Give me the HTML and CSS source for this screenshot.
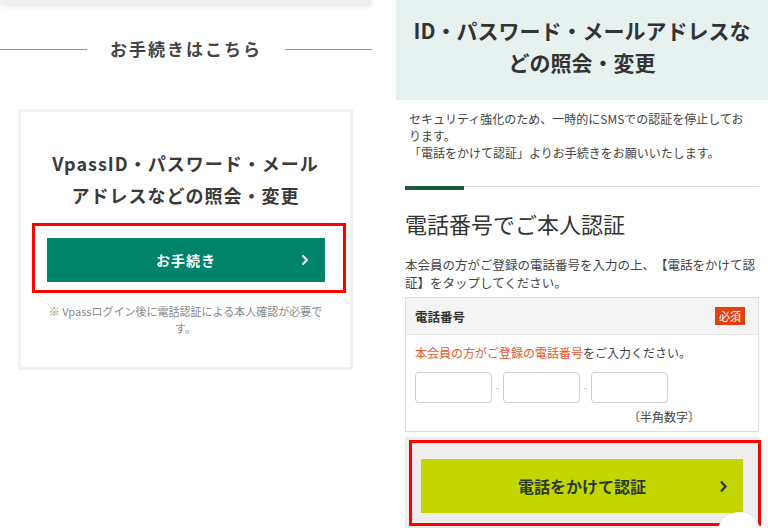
FILE: index.html
```html
<!doctype html>
<html lang="ja">
<head>
<meta charset="utf-8">
<title>お手続き</title>
<link rel="stylesheet" href="styles.css">
</head>
<body>
<div class="page">

  <section class="left">
    <div class="topbar"></div>
    <h2 class="sec-head"><i></i><span>お手続きはこちら</span><i></i></h2>
    <div class="card">
      <h3 class="card-title">VpassID・パスワード・メール<br>アドレスなどの照会・変更</h3>
      <div class="hl">
        <a href="#" class="btn btn-green">
          <span class="btn-label">お手続き</span>
          <svg class="chev" width="8" height="12" viewBox="0 0 8 12"><polyline points="1.5,1.5 6,6 1.5,10.5" fill="none" stroke="#fff" stroke-width="2"/></svg>
        </a>
      </div>
      <p class="note">※ Vpassログイン後に電話認証による本人確認が必要で<br>す。</p>
    </div>
  </section>

  <section class="right">
    <div class="head">
      <h1>ID・パスワード・メールアドレスな<br>どの照会・変更</h1>
    </div>
    <div class="body">
      <p class="lead">セキュリティ強化のため、一時的にSMSでの認証を停止してお<br>ります。<br>「電話をかけて認証」よりお手続きをお願いいたします。</p>

      <div class="divider"><i></i><b></b></div>

      <h2 class="auth-title">電話番号でご本人認証</h2>
      <p class="desc">本会員の方がご登録の電話番号を入力の上、【電話をかけて認<br>証】をタップしてください。</p>

      <div class="form">
        <div class="form-head">
          <span class="form-label">電話番号</span>
          <span class="req">必須</span>
        </div>
        <div class="form-body">
          <p class="hint"><em>本会員の方がご登録の電話番号</em>をご入力ください。</p>
          <div class="tel">
            <input type="text" class="tel-box">
            <span class="dash">-</span>
            <input type="text" class="tel-box">
            <span class="dash">-</span>
            <input type="text" class="tel-box">
          </div>
          <p class="half">〔半角数字〕</p>
        </div>
      </div>

      <div class="submit">
        <a href="#" class="btn btn-lime">
          <span class="btn-label">電話をかけて認証</span>
          <svg class="chev" width="9" height="13" viewBox="0 0 9 13"><polyline points="2,1.5 6.5,6.5 2,11.5" fill="none" stroke="#333" stroke-width="2.2"/></svg>
        </a>
        <div class="hl-over"></div>
      </div>
    </div>
  </section>

</div>
<div class="to-top"></div>
</body>
</html>
```

FILE: styles.css
```css
html, body { margin: 0; overflow: hidden; }
body {
    font-family: "Noto Sans CJK JP", "Noto Sans", sans-serif;
    color: #333;
    background: #fff;
    text-spacing-trim: space-all;
}
.page {
    display: flex;
    gap: 24px;
    width: 768px;
    height: 528px;
}
p, h1, h2, h3 { margin: 0; }

/* left */
.left { width: 372px; }
.topbar {
    height: 4px;
    background: #f0f0f0;
    box-shadow: 0 2px 5px rgba(0,0,0,.12);
}
.sec-head {
    display: flex;
    align-items: center;
    gap: 23px;
    margin-top: 33px;
    font-size: 17px;
    line-height: 24px;
    letter-spacing: 2px;
    color: #444;
    font-weight: bold;
}
.sec-head i {
    flex: 1;
    height: 1px;
    background: #5fae94;
}
.card {
    width: 335px;
    box-sizing: border-box;
    margin: 48px 0 0 18px;
    border: 3px solid #f2f2f2;
    padding: 35px 0 30px;
}
.card-title {
    text-align: center;
    font-size: 18px;
    line-height: 32px;
    letter-spacing: 1px;
    color: #3a3a3a;
}
.hl {
    margin: 12px 4px 0 11px;
    border: 3px solid #f00;
    padding: 12px 18px 8px 12px;
}
.btn {
    display: grid;
    grid-template-columns: 1fr auto 1fr;
    align-items: center;
    text-decoration: none;
    font-weight: bold;
}
.btn-label { grid-column: 2; }
.chev { justify-self: end; }
.btn-green {
    height: 44px;
    background: #00836b;
    color: #fff;
    font-size: 14px;
    letter-spacing: 1px;
    padding: 0 16px;
}
.note {
    margin-top: 10px;
    text-align: center;
    font-size: 11px;
    line-height: 17px;
    color: #888;
}

/* right */
.right { width: 372px; position: relative; }
.head {
    height: 100px;
    box-sizing: border-box;
    padding-top: 14px;
    background: #e7f2f0;
}
.head h1 {
    text-align: center;
    font-size: 21px;
    line-height: 32px;
    color: #333;
}
.body { padding: 0 9px; }
.lead {
    margin-top: 10px;
    padding: 0 4px;
    font-size: 12px;
    line-height: 17px;
    color: #444;
}
.divider {
    display: flex;
    margin-top: 25px;
}
.divider i { width: 59px; height: 4px; background: #1d5b3d; }
.divider b { flex: 1; border-top: 1px solid #ddd; }
.auth-title {
    margin-top: 17px;
    font-size: 22px;
    line-height: 32px;
    font-weight: normal;
    color: #333;
}
.desc {
    margin-top: 17px;
    font-size: 12.5px;
    line-height: 18px;
    color: #444;
}
.form {
    margin-top: 5px;
    border: 1px solid #ddd;
}
.form-head {
    display: flex;
    justify-content: space-between;
    align-items: center;
    height: 36px;
    padding: 0 13px 0 9px;
    background: #f4f4f4;
    border-bottom: 1px solid #e4e4e4;
}
.form-label { font-size: 12.5px; font-weight: bold; color: #333; }
.req {
    background: #e2420f;
    color: #fff;
    font-size: 11px;
    line-height: 18px;
    padding: 0 4px;
}
.form-body { padding: 9px 9px 5px; }
.hint {
    font-size: 12px;
    line-height: 18px;
    color: #444;
}
.hint em { font-style: normal; color: #e8542a; }
.tel {
    display: flex;
    align-items: center;
    margin-top: 10px;
}
.tel-box {
    width: 77px;
    height: 31px;
    box-sizing: border-box;
    border: 1px solid #d0d0d0;
    border-radius: 4px;
    margin: 0;
    padding: 0;
}
.dash {
    width: 11px;
    text-align: center;
    font-size: 9px;
    color: #999;
}
.half {
    margin: 5px 49px 0 0;
    text-align: right;
    font-size: 12px;
    line-height: 18px;
    color: #444;
}
.submit {
    position: relative;
    margin-top: 5px;
    background: #eee;
    padding: 22px 16px 15px;
}
.btn-lime {
    height: 54px;
    background: #c4d600;
    color: #2b3a24;
    font-size: 16px;
    padding: 0 15px;
}
.hl-over {
    position: absolute;
    left: 4px;
    top: 3px;
    width: 352px;
    height: 86px;
    box-sizing: border-box;
    border: 3px solid #f00;
}
.to-top {
    position: absolute;
    left: 717px;
    top: 512px;
    width: 44px;
    height: 44px;
    border-radius: 50%;
    background: #fff;
    box-shadow: 0 0 3px rgba(0,0,0,.08);
}
```
